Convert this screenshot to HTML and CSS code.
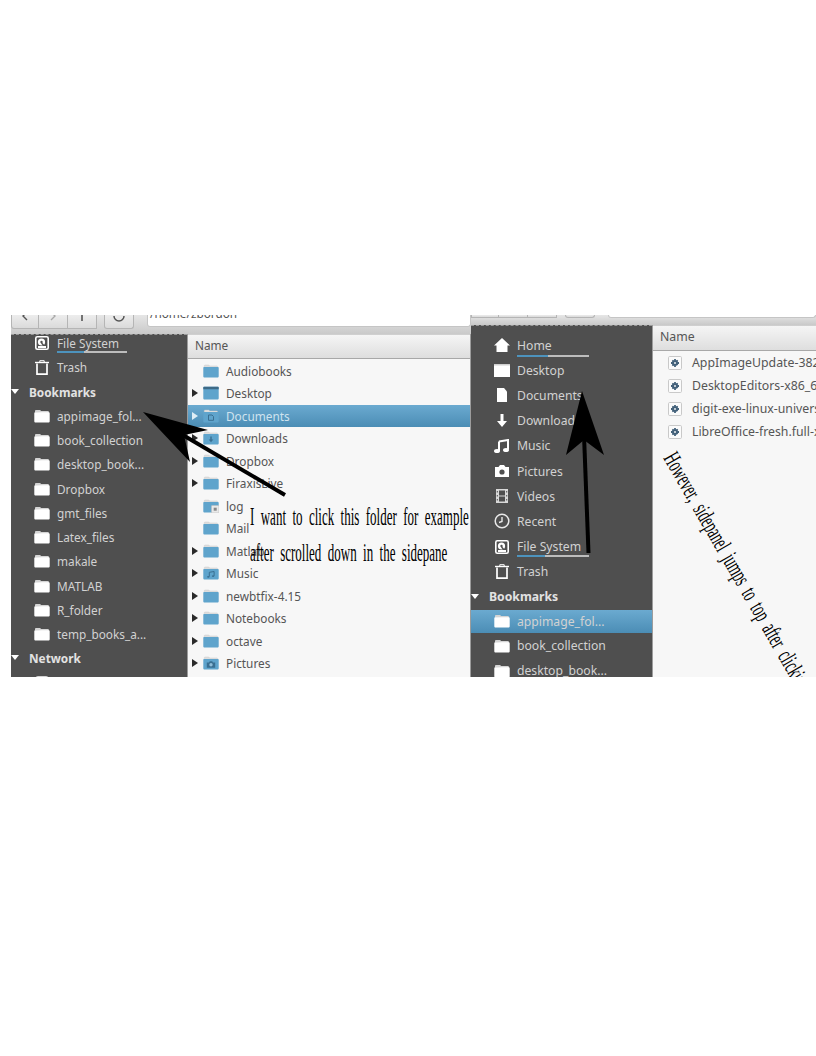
FILE: index.html
```
<!DOCTYPE html>
<html lang="en">
<head>
<meta charset="utf-8">
<title>File manager sidepane</title>
<link rel="stylesheet" href="styles.css">
</head>
<body>
<svg class="defs" aria-hidden="true">
  <symbol id="folder-white" viewBox="0 0 16 14"><path d="M1 3.500V2c0-.6.3-.9.900-.9h4.300l.8 1h7c.6 0 .9.3.9.9v1.500z" fill="#d4d4d4"/><path d="M1.400 3.200h13.200c.7 0 1.100.4 1.100 1.100v7.900c0 .9-.5 1.400-1.400 1.400H1.700c-.9 0-1.400-.5-1.400-1.400V4.300c0-.7.4-1.100 1.100-1.100z" fill="#fff"/></symbol>
  <symbol id="folder-blue" viewBox="0 0 16 14"><path d="M1.200 3.500V1.800c0-.5.3-.8.800-.8h3.900l.8.9h7.100c.5 0 .8.3.8.8v1.800z" fill="#dedede" stroke="#c8c8c8" stroke-width=".4"/><path d="M1.300 3h13.400c.6 0 1 .4 1 1v8.200c0 .8-.5 1.300-1.300 1.300H1.600c-.8 0-1.300-.5-1.300-1.300V4c0-.6.4-1 1-1z" fill="#5fa4cc"/></symbol>
  <symbol id="folder-desk" viewBox="0 0 16 14"><path d="M1.300.8h13.400c.6 0 1 .4 1 1v10.400c0 .8-.5 1.300-1.300 1.300H1.600c-.8 0-1.300-.5-1.300-1.300V1.800c0-.6.4-1 1-1z" fill="#5fa4cc"/><path d="M.3 1.800c0-.6.4-1 1-1h13.400c.6 0 1 .4 1 1v1.400H.3z" fill="#3d6a86"/></symbol>
  <symbol id="folder-doc" viewBox="0 0 16 14"><use href="#folder-blue" width="16" height="14"/><path d="M5.500 6h3.500l1.500 1.500v3.800h-5z" fill="none" stroke="#3a6f91" stroke-width="1"/></symbol>
  <symbol id="folder-down" viewBox="0 0 16 14"><use href="#folder-blue" width="16" height="14"/><path d="M7.300 5.500h1.400v3h1.600L8 11.300 5.700 8.500h1.600z" fill="#3a6f91"/></symbol>
  <symbol id="folder-log" viewBox="0 0 16 14"><use href="#folder-blue" width="16" height="14"/><rect x="8.500" y="6.500" width="7.500" height="7.500" rx=".6" fill="#e9e9e9" stroke="#bdbdbd" stroke-width=".6"/><rect x="10.700" y="8.700" width="3" height="3" fill="#888"/></symbol>
  <symbol id="folder-music" viewBox="0 0 16 14"><use href="#folder-blue" width="16" height="14"/><path d="M6.300 6.300l4.800-.8v4.400M6.300 6.300v4.300" fill="none" stroke="#3a6f91" stroke-width="1"/><ellipse cx="5.300" cy="10.800" rx="1.200" ry=".9" fill="#3a6f91"/><ellipse cx="10.100" cy="10.100" rx="1.200" ry=".9" fill="#3a6f91"/></symbol>
  <symbol id="folder-pic" viewBox="0 0 16 14"><use href="#folder-blue" width="16" height="14"/><path d="M3.800 6.500h2.200l.8-1.200h2.400l.8 1.200h2.200v5.300H3.800z" fill="#3a6f91"/><circle cx="8" cy="8.700" r="1.700" fill="#8fbdd9"/></symbol>
  <symbol id="gear-file" viewBox="0 0 14 14"><rect x=".5" y=".5" width="13" height="13" rx="1.200" fill="#fbfbfb" stroke="#c9c9c9"/><path d="M6.100 3h1.800v1.500H6.100zM6.100 9.500h1.800V11H6.100zM3 6.100h1.500v1.800H3zM9.500 6.100H11v1.800H9.500zM3.800 4.900l1.100-1.100 1 1-1.100 1.100zM8.100 8.100l1.100 1.100 1-1-1.100-1.100zM8.100 4.800l1.100-1 1 1-1.100 1.100zM4.900 10.200l-1.100-1.100 1-1 1.100 1.100z" fill="#43617a"/><circle cx="7" cy="7" r="3" fill="#43617a"/><circle cx="7" cy="7" r="1" fill="#e8eef2"/></symbol>
  <symbol id="disk" viewBox="0 0 14 14"><rect x=".8" y=".8" width="12.400" height="12.400" rx="1.500" fill="#4f4f4f" stroke="#fff" stroke-width="1.600"/><circle cx="6.500" cy="6" r="3.600" fill="#fff"/><circle cx="6.500" cy="6" r="1.200" fill="#4f4f4f"/><path d="M6.500 7l3.600 4" stroke="#4f4f4f" stroke-width="1.400"/><rect x="3" y="10" width="8" height="2" fill="#fff"/></symbol>
  <symbol id="trash" viewBox="0 0 14 15"><path d="M0 2.500h14" fill="none" stroke="#fff" stroke-width="1.400"/><path d="M4.800 2.500V.7h4.400v1.800" fill="none" stroke="#fff" stroke-width="1"/><path d="M2 3.500v10.700h10V3.500" fill="none" stroke="#fff" stroke-width="1.700"/></symbol>
</svg>

<main class="page">
  <div class="shots">

    <section class="win win-left">
      <div class="toolbar tb-left">
        <span class="tbtn tbtn-a"><svg width="10" height="10" viewBox="0 0 10 10"><path d="M7 -3L3 1L7 5" fill="none" stroke="#555" stroke-width="1.400"/></svg></span>
        <span class="tbtn tbtn-b"><svg width="10" height="10" viewBox="0 0 10 10"><path d="M3 -3L7 1L3 5" fill="none" stroke="#aaa" stroke-width="1.400"/></svg></span>
        <span class="tbtn tbtn-b"><svg width="10" height="10" viewBox="0 0 10 10"><path d="M5 -2V6" fill="none" stroke="#555" stroke-width="1.600"/></svg></span>
        <span class="tbtn tbtn-c"><svg width="14" height="12" viewBox="0 0 14 12"><path d="M2 1a5 5 0 0 0 10 0" fill="none" stroke="#555" stroke-width="1.500"/></svg></span>
        <span class="path-entry"><span class="path-text">/home/zbordon</span></span>
      </div>
      <div class="panes">
        <nav class="side side-left">
          <div class="side-row"><svg class="ic-disk"><use href="#disk"/></svg><span class="label underlined ul-fs">File System</span></div>
          <div class="side-row"><svg class="ic-trash"><use href="#trash"/></svg><span class="label">Trash</span></div>
          <div class="side-head"><span class="tri-down"></span>Bookmarks</div>
          <div class="side-row"><svg class="ic-folder"><use href="#folder-white"/></svg><span class="label">appimage_fol...</span></div>
          <div class="side-row"><svg class="ic-folder"><use href="#folder-white"/></svg><span class="label">book_collection</span></div>
          <div class="side-row"><svg class="ic-folder"><use href="#folder-white"/></svg><span class="label">desktop_book...</span></div>
          <div class="side-row"><svg class="ic-folder"><use href="#folder-white"/></svg><span class="label">Dropbox</span></div>
          <div class="side-row"><svg class="ic-folder"><use href="#folder-white"/></svg><span class="label">gmt_files</span></div>
          <div class="side-row"><svg class="ic-folder"><use href="#folder-white"/></svg><span class="label">Latex_files</span></div>
          <div class="side-row"><svg class="ic-folder"><use href="#folder-white"/></svg><span class="label">makale</span></div>
          <div class="side-row"><svg class="ic-folder"><use href="#folder-white"/></svg><span class="label">MATLAB</span></div>
          <div class="side-row"><svg class="ic-folder"><use href="#folder-white"/></svg><span class="label">R_folder</span></div>
          <div class="side-row"><svg class="ic-folder"><use href="#folder-white"/></svg><span class="label">temp_books_a...</span></div>
          <div class="side-head"><span class="tri-down"></span>Network</div>
          <div class="side-row"><svg class="ic-disk" viewBox="0 0 14 14"><rect x="1" y="1" width="12" height="12" rx="2" fill="none" stroke="#fff" stroke-width="1.600"/></svg></div>
        </nav>
        <div class="list list-left">
          <div class="list-head">Name</div>
          <div class="rows">
            <div class="row"><span class="exp"></span><svg class="ic-list"><use href="#folder-blue"/></svg><span>Audiobooks</span></div>
            <div class="row"><span class="exp tri-right"></span><svg class="ic-list"><use href="#folder-desk"/></svg><span>Desktop</span></div>
            <div class="row row-sel"><span class="exp tri-right"></span><svg class="ic-list"><use href="#folder-doc"/></svg><span>Documents</span></div>
            <div class="row"><span class="exp tri-right"></span><svg class="ic-list"><use href="#folder-down"/></svg><span>Downloads</span></div>
            <div class="row"><span class="exp tri-right"></span><svg class="ic-list"><use href="#folder-blue"/></svg><span>Dropbox</span></div>
            <div class="row"><span class="exp tri-right"></span><svg class="ic-list"><use href="#folder-blue"/></svg><span>FiraxisLive</span></div>
            <div class="row"><span class="exp"></span><svg class="ic-list"><use href="#folder-log"/></svg><span>log</span></div>
            <div class="row"><span class="exp"></span><svg class="ic-list"><use href="#folder-blue"/></svg><span>Mail</span></div>
            <div class="row"><span class="exp tri-right"></span><svg class="ic-list"><use href="#folder-blue"/></svg><span>Matlab</span></div>
            <div class="row"><span class="exp tri-right"></span><svg class="ic-list"><use href="#folder-music"/></svg><span>Music</span></div>
            <div class="row"><span class="exp tri-right"></span><svg class="ic-list"><use href="#folder-blue"/></svg><span>newbtfix-4.15</span></div>
            <div class="row"><span class="exp tri-right"></span><svg class="ic-list"><use href="#folder-blue"/></svg><span>Notebooks</span></div>
            <div class="row"><span class="exp tri-right"></span><svg class="ic-list"><use href="#folder-blue"/></svg><span>octave</span></div>
            <div class="row"><span class="exp tri-right"></span><svg class="ic-list"><use href="#folder-pic"/></svg><span>Pictures</span></div>
          </div>
        </div>
      </div>
    </section>

    <section class="win win-right">
      <div class="toolbar tb-right">
        <span class="tbtn tbtn-d"></span><span class="tbtn tbtn-d"></span><span class="tbtn tbtn-d"></span><span class="tbtn tbtn-e"></span><span class="path-entry"></span>
      </div>
      <div class="panes">
        <nav class="side side-right">
          <div class="side-row"><svg class="ic-side" viewBox="0 0 16 14"><path d="M8 0L16 7.500H13.500V14H2.500V7.500H0z" fill="#fff"/></svg><span class="label underlined ul-home">Home</span></div>
          <div class="side-row"><svg class="ic-side" viewBox="0 0 16 14"><rect y="1" width="16" height="13" fill="#fff"/><rect y="1" width="16" height="1.500" fill="#cfcfcf"/></svg><span class="label">Desktop</span></div>
          <div class="side-row"><svg class="ic-side" viewBox="0 0 16 14"><path d="M3 0h7l3 3.500V14H3z" fill="#fff"/></svg><span class="label">Documents</span></div>
          <div class="side-row"><svg class="ic-side" viewBox="0 0 16 14"><path d="M6.500 0h3v7H13L8 13 3 7h3.500z" fill="#fff"/></svg><span class="label">Downloads</span></div>
          <div class="side-row"><svg class="ic-side" viewBox="0 0 16 14"><path d="M5 2.500L14 1v9.500" fill="none" stroke="#fff" stroke-width="2"/><path d="M5 2.500V12" stroke="#fff" stroke-width="2"/><ellipse cx="3" cy="12" rx="3" ry="2" fill="#fff"/><ellipse cx="12" cy="11" rx="3" ry="2" fill="#fff"/></svg><span class="label">Music</span></div>
          <div class="side-row"><svg class="ic-side" viewBox="0 0 16 14"><path d="M1 3h3.500L6 1h4l1.500 2H15v10H1z" fill="#fff"/><circle cx="8" cy="8" r="2.600" fill="#4f4f4f"/></svg><span class="label">Pictures</span></div>
          <div class="side-row"><svg class="ic-side" viewBox="0 0 16 14"><path d="M2 0h12v14H2z" fill="#d8d8d8"/><path d="M5 1.500h6v5H5zM5 7.500h6v5H5z" fill="#4f4f4f"/><path d="M2.800 2h1v1.500h-1zM2.800 6h1v1.500h-1zM2.800 10h1v1.500h-1zM12.200 2h1v1.500h-1zM12.200 6h1v1.500h-1zM12.200 10h1v1.500h-1z" fill="#4f4f4f"/></svg><span class="label">Videos</span></div>
          <div class="side-row"><svg class="ic-recent" viewBox="0 0 16 16"><circle cx="8" cy="8" r="6.800" fill="none" stroke="#e8e8e8" stroke-width="1.500"/><path d="M8 4v4.500l-3 1" fill="none" stroke="#e8e8e8" stroke-width="1.400"/></svg><span class="label">Recent</span></div>
          <div class="side-row"><svg class="ic-disk"><use href="#disk"/></svg><span class="label underlined ul-fs2">File System</span></div>
          <div class="side-row"><svg class="ic-trash"><use href="#trash"/></svg><span class="label">Trash</span></div>
          <div class="side-head"><span class="tri-down"></span>Bookmarks</div>
          <div class="side-row side-sel"><svg class="ic-folder"><use href="#folder-white"/></svg><span class="label">appimage_fol...</span></div>
          <div class="side-row"><svg class="ic-folder"><use href="#folder-white"/></svg><span class="label">book_collection</span></div>
          <div class="side-row"><svg class="ic-folder"><use href="#folder-white"/></svg><span class="label">desktop_book...</span></div>
        </nav>
        <div class="list list-right">
          <div class="list-head list-head-right">Name</div>
          <div class="row row-file"><svg class="ic-file"><use href="#gear-file"/></svg><span>AppImageUpdate-382</span></div>
          <div class="row row-file"><svg class="ic-file"><use href="#gear-file"/></svg><span>DesktopEditors-x86_64</span></div>
          <div class="row row-file"><svg class="ic-file"><use href="#gear-file"/></svg><span>digit-exe-linux-universal</span></div>
          <div class="row row-file"><svg class="ic-file"><use href="#gear-file"/></svg><span>LibreOffice-fresh.full-x86</span></div>
        </div>
      </div>
    </section>

    <svg class="arrows" viewBox="0 0 805 362" aria-hidden="true">
      <path d="M132 97L197 115L173 120L179 147z" fill="#000"/>
      <path d="M165 116L274 180" stroke="#000" stroke-width="4" fill="none"/>
      <path d="M571 76L593 140L573 125L555 140z" fill="#000"/>
      <path d="M573 120L577.500 238" stroke="#000" stroke-width="4" fill="none"/>
    </svg>
    <p class="note note-1">I want to click this folder for example</p>
    <p class="note note-2">after scrolled down in the sidepane</p>
    <p class="note note-3">However, sidepanel jumps to top after clicking</p>
  </div>
</main>
</body>
</html>
```
FILE: styles.css
```
* { box-sizing: border-box; }
html, body { margin: 0; padding: 0; background: #fff; }
body { font-family: "Noto Sans", sans-serif; font-size: 12.5px; }
.defs { position: absolute; width: 0; height: 0; }
.page { height: 1056px; padding: 315px 0 0 11px; }
.shots { position: relative; display: flex; width: 805px; height: 362px; overflow: hidden; }

.win { display: flex; flex-direction: column; height: 362px; flex: none; overflow: hidden; }
.win-left { width: 460px; font-size: 11.8px; }
.win-right { width: 345px; font-size: 12.2px; }

.toolbar { display: flex; align-items: flex-end; flex: none; background: linear-gradient(#e6e6e6, #c9c9c9); }
.tb-left { height: 19px; padding: 0 0 5px 0; }
.tb-right { height: 10px; padding: 0 0 7px 0; }
.tbtn { display: flex; justify-content: center; align-items: flex-start; height: 100%; background: linear-gradient(#ededed, #dadada); border: 1px solid #b5b5b5; border-top: 0; overflow: hidden; }
.tbtn-a { width: 28px; border-radius: 0 0 0 3px; }
.tbtn-b { width: 29px; border-left: 0; }
.tbtn-c { width: 30px; margin-left: 7px; border-radius: 0 0 3px 3px; }
.tbtn-d { width: 29px; border-left: 0; }
.tbtn-e { width: 30px; margin-left: 8px; border-radius: 0 0 3px 3px; }
.tb-right .tbtn-d:first-child { width: 28px; border-left: 1px solid #b5b5b5; }
.path-entry { flex: 1; height: calc(100% - 2px); margin: 0 0 2px 13px; background: #fff; border: 1px solid #c5c5c5; border-top: 0; border-radius: 0 0 3px 3px; overflow: hidden; }
.tb-right .path-entry { height: 100%; margin-bottom: 0; }
.path-text { display: block; margin: -12px 0 0 2px; color: #555; line-height: 20px; }

.panes { display: flex; flex: 1; min-height: 0; }
.side { flex: none; background: #4f4f4f; color: #d2d2d2; border-top: 1px dashed #9a9a9a; }
.side-left { width: 176px; }
.side-left > :first-child { margin-top: -4px; }
.side-right { width: 181px; padding-top: 6.500px; }
.side-row, .side-head { display: flex; align-items: center; }
.side-left .side-row, .side-left .side-head { height: 24.250px; }
.side-right .side-row, .side-right .side-head { height: 25.200px; }
.side-right .side-sel { height: 23.400px; }
.side-row { padding-left: 23px; gap: 7px; }
.side-head { padding-left: 18px; font-weight: 700; color: #e2e2e2; position: relative; }
.tri-down { position: absolute; left: 0; top: 50%; margin-top: -3px; width: 0; height: 0; border: 4.500px solid transparent; border-top: 5px solid #fff; border-bottom: 0; }
.ic-side { width: 16px; height: 14px; flex: none; }
.ic-folder { width: 16px; height: 14px; flex: none; }
.ic-disk { width: 14px; height: 14px; flex: none; margin: 0 1px; }
.ic-recent { width: 16px; height: 16px; flex: none; }
.ic-trash { width: 14px; height: 15px; flex: none; margin: 0 1px; }
.label { white-space: nowrap; position: relative; }
.underlined::after { content: ""; position: absolute; left: 0; bottom: -2px; height: 2px; }
.ul-fs::after { width: 70px; background: linear-gradient(90deg, #4d93bd 38%, #bdbdbd 38%); }
.ul-home::after { width: 72px; bottom: -3px; background: linear-gradient(90deg, #4d93bd 43%, #bdbdbd 43%); }
.ul-fs2::after { width: 72px; background: linear-gradient(90deg, #4d93bd 39%, #bdbdbd 39%); }
.side-sel { background: linear-gradient(#6baad0, #4b8db5); }

.list { flex: 1; min-width: 0; background: #f7f7f7; color: #555; border-left: 1px solid #9c9c9c; overflow: hidden; }
.list-left { border-right: 1px solid #9c9c9c; }
.list-right { font-size: 12.3px; }
.list-head { height: 25px; padding: 3px 0 0 7px; line-height: 15px; background: linear-gradient(#f5f5f5, #dedede); border-top: 1px solid #cfcfcf; border-bottom: 1px solid #a8a8a8; }
.list-head-right { height: 26px; }
.rows { padding-top: .5px; }
.row { display: flex; align-items: center; height: 22.500px; white-space: nowrap; }
.row-file { height: 23px; padding-left: 15px; gap: 10px; }
.exp { width: 15px; flex: none; display: flex; justify-content: center; }
.tri-right { height: 0; width: 0; margin: 0 5px 0 4px; border: 4px solid transparent; border-left: 6px solid #2a2a2a; border-right: 0; }
.ic-list { width: 16px; height: 14px; flex: none; margin-right: 7px; }
.ic-file { width: 14px; height: 14px; flex: none; }
.row-sel { background: linear-gradient(#6baad0, #4b8db5); color: #cfe3ef; }
.row-sel .tri-right { border-left-color: #dfeef6; }

.arrows { position: absolute; left: 0; top: 0; width: 805px; height: 362px; }
.note { position: absolute; margin: 0; font-family: "Liberation Serif", serif; font-size: 26px; line-height: 30px; color: #000; white-space: nowrap; transform-origin: 0 50%; }
.note-1 { left: 239px; top: 187px; word-spacing: 6.300px; transform: scaleX(.5); }
.note-2 { left: 239px; top: 223px; word-spacing: 6.300px; transform: scaleX(.5); }
.note-3 { left: 659px; top: 124px; font-size: 24px; word-spacing: 6px; transform: rotate(60deg) scaleX(.56); }
```
